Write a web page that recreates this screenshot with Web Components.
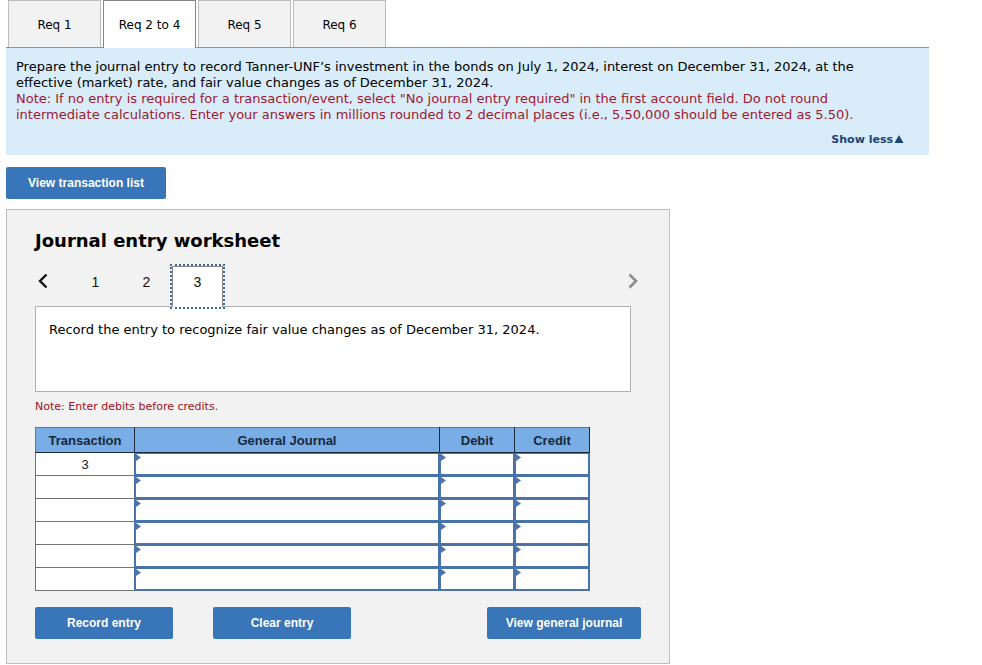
<!DOCTYPE html>
<html lang="en">
<head>
<meta charset="utf-8">
<title>Journal entry worksheet</title>
<style>
  body { margin: 0; background: #fff; color: #000; font: 13px/16px Verdana, "DejaVu Sans", sans-serif; }
</style>
</head>
<body>
<exercise-page>
  <requirement-tabs labels="Req 1|Req 2 to 4|Req 5|Req 6" selected="1"></requirement-tabs>
  <instruction-panel>
    <span>Prepare the journal entry to record Tanner-UNF’s investment in the bonds on July 1, 2024, interest on December 31, 2024, at the effective (market) rate, and fair value changes as of December 31, 2024.</span>
    <span slot="note">Note: If no entry is required for a transaction/event, select "No journal entry required" in the first account field. Do not round intermediate calculations. Enter your answers in millions rounded to 2 decimal places (i.e., 5,50,000 should be entered as 5.50).</span>
  </instruction-panel>
  <action-button style="--width: 160px">View transaction list</action-button>
  <worksheet-card>
    <span slot="title">Journal entry worksheet</span>
    <entry-pager count="3" current="3"></entry-pager>
    <entry-prompt>Record the entry to recognize fair value changes as of December 31, 2024.</entry-prompt>
    <entry-note>Note: Enter debits before credits.</entry-note>
    <journal-table transaction="3" rows="6"></journal-table>
    <action-button slot="actions" style="--width: 138px">Record entry</action-button>
    <action-button slot="actions" style="--width: 138px">Clear entry</action-button>
    <action-button slot="actions" style="--width: 154px; margin-left: auto">View general journal</action-button>
  </worksheet-card>
</exercise-page>

<script>
function define(name, render) {
  customElements.define(name, class extends HTMLElement {
    constructor() {
      super();
      this.attachShadow({ mode: "open" });
    }
    connectedCallback() {
      this.shadowRoot.innerHTML = render(this);
    }
  });
}

define("exercise-page", () => `
  <style>
    :host { display: flex; flex-direction: column; align-items: flex-start; padding: 0 6px; }
    ::slotted(requirement-tabs), ::slotted(instruction-panel) { width: 100%; max-width: 923px; box-sizing: border-box; }
    ::slotted(action-button) { margin: 12px 0 10px; }
    ::slotted(worksheet-card) { width: 100%; max-width: 664px; box-sizing: border-box; }
  </style>
  <slot></slot>`);

define("requirement-tabs", host => {
  const selected = Number(host.getAttribute("selected"));
  const tabs = host.getAttribute("labels").split("|").map((label, i) =>
    `<button type="button" role="tab" aria-selected="${i === selected}">${label}</button>`).join("");
  return `
  <style>
    :host { display: block; }
    div { display: flex; gap: 2px; padding-left: 2px; border-bottom: 1px solid #8e9499; }
    button { box-sizing: border-box; width: 93px; height: 47px; padding: 1px 0 0; border: 1px solid #bcbcbc;
      border-bottom: 0; background: #f2f2f2; color: #000; font-family: inherit; font-size: 12px; }
    button[aria-selected="true"] { height: 48px; margin-bottom: -1px; padding: 1px 0; background: #fff; border-color: #858585; }
  </style>
  <div role="tablist">${tabs}</div>`;
});

define("instruction-panel", () => `
  <style>
    :host { display: flex; flex-direction: column; padding: 11px 25px 8px 10px; background: #d9ecf9; }
    .text { padding-right: 20px; }
    .note { color: #a01830; }
    button { align-self: flex-end; display: flex; align-items: center; gap: 1px; height: 16px; margin-top: 8px; padding: 0;
      border: 0; background: none; color: #1c4577; font-family: inherit; font-size: 11px; font-weight: bold; }
  </style>
  <div class="text"><slot></slot></div>
  <div class="text note"><slot name="note"></slot></div>
  <button type="button" aria-expanded="true">Show less<svg width="10" height="8" viewBox="0 0 10 8" aria-hidden="true"><path d="M5 0 9.5 8H.5Z" fill="currentColor"/></svg></button>`);

define("action-button", () => `
  <style>
    :host { display: block; }
    button { width: var(--width); height: 32px; padding: 0; border: 0; border-radius: 2px; background: #3875b9;
      color: #fff; font: bold 12px "Liberation Sans", Arial, sans-serif; display: block; }
  </style>
  <button type="button"><slot></slot></button>`);

define("worksheet-card", () => `
  <style>
    :host { display: block; padding: 20px 28px 24px; border: 1px solid #bfbfbf; background: #f2f2f2; }
    h2 { margin: 0 0 14px; font-size: 18px; line-height: 22px; }
    .actions { display: flex; gap: 40px; margin-top: 16px; }
  </style>
  <h2><slot name="title"></slot></h2>
  <slot></slot>
  <div class="actions"><slot name="actions"></slot></div>`);

define("entry-pager", host => {
  const current = Number(host.getAttribute("current"));
  let pages = "";
  for (let n = 1; n <= Number(host.getAttribute("count")); n++)
    pages += `<button type="button" class="page"${n === current ? ' aria-current="page"' : ""}>${n}</button>`;
  return `
  <style>
    :host { display: flex; height: 40px; }
    button { box-sizing: border-box; padding: 0; border: 0; background: none; color: #111;
      font: 14px "Liberation Sans", Arial, sans-serif; }
    .arrow { display: flex; align-items: center; width: 35px; padding: 0 2px 10px; }
    .next { justify-content: flex-end; margin-left: auto; color: #8c8c8c; }
    .page { width: 51px; padding-bottom: 8px; }
    .page[aria-current] { position: relative; height: 41px; border: 1px solid #8a8a8a; border-bottom: 0; background: #fff;
      outline: 2px dotted #4068a0; padding-bottom: 10px; }
  </style>
  <button type="button" class="arrow" aria-label="Previous entry"><svg width="11" height="16" viewBox="0 0 11 16" fill="none" stroke="currentColor" stroke-width="2.4"><path d="M9.5 1.5 3 8l6.500 6.500"/></svg></button>
  ${pages}
  <button type="button" class="arrow next" aria-label="Next entry"><svg width="11" height="16" viewBox="0 0 11 16" fill="none" stroke="currentColor" stroke-width="2.6"><path d="M1.500 1.500 8 8l-6.500 6.500"/></svg></button>`;
});

define("entry-prompt", () => `
  <style>
    :host { display: block; box-sizing: border-box; min-height: 86px; margin-right: 10px; padding: 15px 13px;
      border: 1px solid #b0b0b0; background: #fff; }
  </style>
  <slot></slot>`);

define("entry-note", () => `
  <style>
    :host { display: block; margin: 7px 0 12px; color: #a01020; font-size: 11px; }
  </style>
  <slot></slot>`);

define("journal-table", host => {
  let rows = "";
  for (let r = 1; r <= Number(host.getAttribute("rows")); r++) {
    const cells = ["General journal", "Debit", "Credit"].map(name =>
      `<td class="field"><i></i><input type="text" aria-label="${name}, row ${r}"></td>`).join("");
    rows += `<tr><td>${r === 1 ? host.getAttribute("transaction") : ""}</td>${cells}</tr>`;
  }
  return `
  <style>
    :host { display: block; padding-right: 51px; }
    table { width: 100%; table-layout: fixed; border-collapse: collapse; font: 13px/15px "Liberation Sans", Arial, sans-serif; color: #222; }
    col.id { width: 99px; } col.amount { width: 75px; }
    th { height: 24px; padding: 0; border: 1px solid #1a2a3c; background: #79ade5; color: #16283c; }
    tr:first-child th { border-top-color: #6b7780; }
    th:first-child { border-left-color: #6b7780; }
    td { height: 22px; padding: 0; border: 1px solid #6f7577; background: #fff; text-align: center; }
    td:first-child { border-right-color: #4a70a4; }
    td.field { position: relative; border-color: #4a70a4; }
    input { display: block; box-sizing: border-box; width: 100%; height: 22px; margin: 0; padding: 0 6px;
      border: 1px solid #4a74ae; border-radius: 0; background: #fff; font: inherit; }
    i { position: absolute; left: 1px; top: 1px; width: 5px; height: 7px; background: #4a74ae; clip-path: polygon(0 0, 100% 50%, 0 100%); }
  </style>
  <table>
    <colgroup><col class="id"><col><col class="amount"><col class="amount"></colgroup>
    <thead><tr><th scope="col">Transaction</th><th scope="col">General Journal</th><th scope="col">Debit</th><th scope="col">Credit</th></tr></thead>
    <tbody>${rows}</tbody>
  </table>`;
});
</script>
</body>
</html>
